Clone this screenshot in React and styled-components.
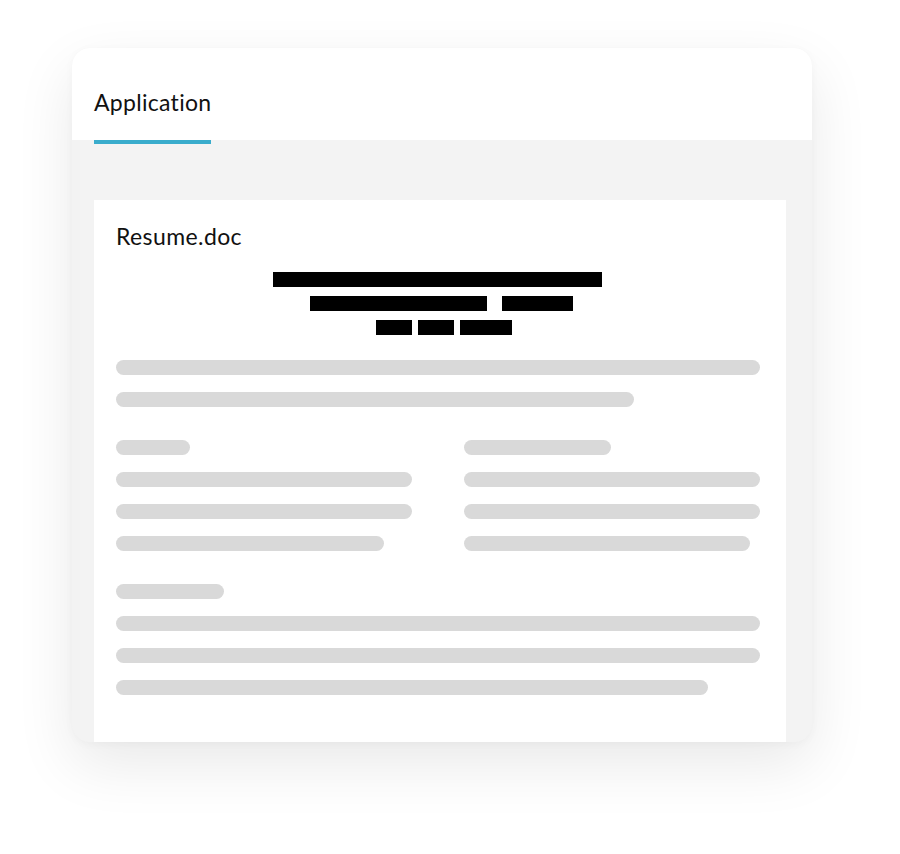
import React from "react";
import styled, { createGlobalStyle } from "styled-components";

const GlobalStyle = createGlobalStyle`
  html, body {
    margin: 0;
    padding: 0;
    background: #ffffff;
  }
  body {
    font-family: "Lato", "Open Sans", sans-serif;
    color: #111111;
  }
`;

const Page = styled.div`
  width: 900px;
  height: 854px;
  padding: 48px 0 0 72px;
  box-sizing: border-box;
`;

const Card = styled.div`
  width: 740px;
  height: 694px;
  border-radius: 18px;
  overflow: hidden;
  background: #f3f3f3;
  box-shadow: 0 22px 60px rgba(0, 0, 0, 0.09), 0 2px 10px rgba(0, 0, 0, 0.03);
  display: flex;
  flex-direction: column;
`;

const Header = styled.div`
  height: 92px;
  flex-shrink: 0;
  background: #ffffff;
  display: flex;
  align-items: flex-end;
  padding-left: 22px;
`;

const Tab = styled.div`
  position: relative;
  z-index: 1;
  margin-bottom: -4px;
  padding: 0 0 24px 0;
  border-bottom: 4px solid #3aaccc;
  font-size: 23px;
  line-height: 28px;
  letter-spacing: 0.3px;
  color: #111111;
`;

const Body = styled.div`
  flex: 1;
  padding: 60px 26px 0 22px;
  display: flex;
`;

const Doc = styled.div`
  flex: 1;
  background: #ffffff;
  padding: 22px 26px 0 22px;
  display: flex;
  flex-direction: column;
`;

const FileName = styled.div`
  font-size: 23px;
  line-height: 28px;
  letter-spacing: 0.4px;
  color: #111111;
`;

const Heading = styled.div`
  display: flex;
  flex-direction: column;
  align-items: center;
  gap: 9px;
  margin-top: 22px;
  margin-bottom: 25px;
`;

const BlackRow = styled.div`
  display: flex;
  justify-content: center;
  gap: ${(p) => p.$gap}px;
  margin-left: ${(p) => p.$shift || 0}px;
`;

const BlackBar = styled.div`
  height: 15px;
  width: ${(p) => p.$w}px;
  background: #000000;
`;

const Lines = styled.div`
  display: flex;
  flex-direction: column;
  gap: 17px;
  margin-bottom: ${(p) => p.$mb || 0}px;
`;

const Line = styled.div`
  height: 15px;
  width: ${(p) => p.$w}px;
  border-radius: 8px;
  background: #d9d9d9;
`;

const Columns = styled.div`
  display: grid;
  grid-template-columns: 296px 296px;
  column-gap: 52px;
  margin-bottom: 33px;
`;

export default function App() {
  return (
    <>
      <GlobalStyle />
      <Page>
        <Card>
          <Header>
            <Tab>Application</Tab>
          </Header>
          <Body>
            <Doc>
              <FileName>Resume.doc</FileName>
              <Heading>
                <BlackRow $gap={0} $shift={-1}>
                  <BlackBar $w={329} />
                </BlackRow>
                <BlackRow $gap={15} $shift={6}>
                  <BlackBar $w={177} />
                  <BlackBar $w={71} />
                </BlackRow>
                <BlackRow $gap={6} $shift={12}>
                  <BlackBar $w={36} />
                  <BlackBar $w={36} />
                  <BlackBar $w={52} />
                </BlackRow>
              </Heading>
              <Lines $mb={33}>
                <Line $w={644} />
                <Line $w={518} />
              </Lines>
              <Columns>
                <Lines>
                  <Line $w={74} />
                  <Line $w={296} />
                  <Line $w={296} />
                  <Line $w={268} />
                </Lines>
                <Lines>
                  <Line $w={147} />
                  <Line $w={296} />
                  <Line $w={296} />
                  <Line $w={286} />
                </Lines>
              </Columns>
              <Lines>
                <Line $w={108} />
                <Line $w={644} />
                <Line $w={644} />
                <Line $w={592} />
              </Lines>
            </Doc>
          </Body>
        </Card>
      </Page>
    </>
  );
}
